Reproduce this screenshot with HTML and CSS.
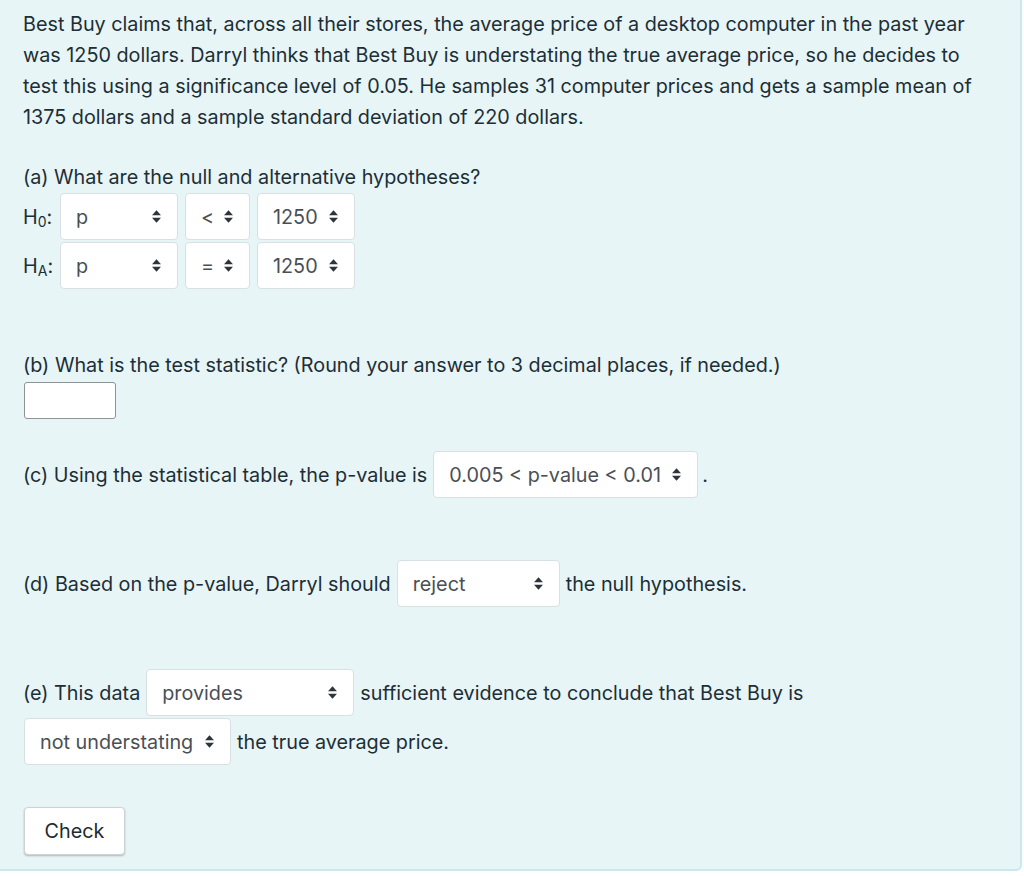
FILE: index.html
```html
<!DOCTYPE html>
<html>
<head>
<meta charset="utf-8">
<link rel="stylesheet" href="styles.css">
</head>
<body>
<div class="panel">
  <p class="intro">Best Buy claims that, across all their stores, the average price of a desktop computer in the past year was 1250 dollars. Darryl thinks that Best Buy is understating the true average price, so he decides to test this using a significance level of 0.05. He samples 31 computer prices and gets a sample mean of 1375 dollars and a sample standard deviation of 220 dollars.</p>

  <div class="line q-a">(a) What are the null and alternative hypotheses?</div>
  <div class="row hyp">
    <span class="hlabel">H<sub>0</sub>:</span>
    <span class="sel w-p"><span>p</span><svg class="arr" viewBox="0 0 10 14"><path d="M5 0 L10 5.6 H0 Z M5 14 L10 8.4 H0 Z"/></svg></span>
    <span class="sel w-op"><span>&lt;</span><svg class="arr" viewBox="0 0 10 14"><path d="M5 0 L10 5.6 H0 Z M5 14 L10 8.4 H0 Z"/></svg></span>
    <span class="sel w-num"><span>1250</span><svg class="arr" viewBox="0 0 10 14"><path d="M5 0 L10 5.6 H0 Z M5 14 L10 8.4 H0 Z"/></svg></span>
  </div>
  <div class="row hyp hyp2">
    <span class="hlabel">H<sub>A</sub>:</span>
    <span class="sel w-p"><span>p</span><svg class="arr" viewBox="0 0 10 14"><path d="M5 0 L10 5.6 H0 Z M5 14 L10 8.4 H0 Z"/></svg></span>
    <span class="sel w-op"><span>=</span><svg class="arr" viewBox="0 0 10 14"><path d="M5 0 L10 5.6 H0 Z M5 14 L10 8.4 H0 Z"/></svg></span>
    <span class="sel w-num"><span>1250</span><svg class="arr" viewBox="0 0 10 14"><path d="M5 0 L10 5.6 H0 Z M5 14 L10 8.4 H0 Z"/></svg></span>
  </div>

  <div class="line q-b">(b) What is the test statistic? (Round your answer to 3 decimal places, if needed.)</div>
  <div class="input-box"></div>

  <div class="row q-c">
    <span>(c) Using the statistical table, the p-value is</span>
    <span class="sel w-pv"><span>0.005 &lt; p-value &lt; 0.01</span><svg class="arr" viewBox="0 0 10 14"><path d="M5 0 L10 5.6 H0 Z M5 14 L10 8.4 H0 Z"/></svg></span>
    <span class="dot">.</span>
  </div>

  <div class="row q-d">
    <span>(d) Based on the p-value, Darryl should</span>
    <span class="sel w-rej"><span>reject</span><svg class="arr" viewBox="0 0 10 14"><path d="M5 0 L10 5.6 H0 Z M5 14 L10 8.4 H0 Z"/></svg></span>
    <span>the null hypothesis.</span>
  </div>

  <div class="row q-e">
    <span>(e) This data</span>
    <span class="sel w-prov"><span>provides</span><svg class="arr" viewBox="0 0 10 14"><path d="M5 0 L10 5.6 H0 Z M5 14 L10 8.4 H0 Z"/></svg></span>
    <span>sufficient evidence to conclude that Best Buy is</span>
  </div>
  <div class="row q-e2">
    <span class="sel w-und"><span>not understating</span><svg class="arr" viewBox="0 0 10 14"><path d="M5 0 L10 5.6 H0 Z M5 14 L10 8.4 H0 Z"/></svg></span>
    <span>the true average price.</span>
  </div>

  <button class="check">Check</button>
</div>
</body>
</html>
```

FILE: styles.css
```css
html, body {
  margin: 0;
  padding: 0;
  background: #ffffff;
}

body {
  font-family: Inter, "Liberation Sans", sans-serif;
  font-size: 19.8px;
  color: #1d2e35;
}

.panel {
  width: 1022px;
  background: #e7f5f7;
  border-right: 2px solid #c9e9ee;
  border-bottom: 2px solid #c9e9ee;
  border-bottom-right-radius: 6px;
  padding: 9px 0 14px 23px;
  box-sizing: border-box;
}

.intro {
  margin: 0;
  line-height: 31px;
  width: 970px;
}

.line {
  line-height: 31px;
}

.q-a { margin-top: 29px; }
.q-b { margin-top: 61px; }

.row {
  display: flex;
  align-items: center;
  gap: 6px;
  height: 47px;
}

.hyp { gap: 7px; }
.hyp2 { margin-top: 2px; }

.hlabel {
  width: 30px;
}

.hlabel sub {
  font-size: 14px;
  vertical-align: -3px;
  line-height: 0;
}

.sel {
  display: inline-flex;
  align-items: center;
  justify-content: space-between;
  box-sizing: border-box;
  height: 47px;
  background: #ffffff;
  border: 1px solid #d9dfe2;
  border-radius: 4px;
  padding: 0 16px 0 15px;
  color: #4a4f54;
  white-space: nowrap;
}

.arr {
  width: 9px;
  height: 13px;
  fill: #2f3438;
  flex: none;
}

.w-p { width: 118px; }
.w-op { width: 65px; }
.w-num { width: 98px; }
.w-pv { width: 265px; }
.w-rej { width: 163px; }
.w-prov { width: 208px; }
.w-und { width: 207px; }

.dot { margin-left: -2px; }

.input-box {
  width: 92px;
  height: 37px;
  box-sizing: border-box;
  margin-top: 1px;
  margin-left: 1px;
  background: #ffffff;
  border: 1px solid #8f9396;
  border-radius: 3px;
}

.q-c { margin-top: 32px; }
.q-d { margin-top: 62px; }
.q-e { margin-top: 62px; }
.q-e2 { margin-top: 2px; margin-left: 1px; }

.check {
  display: block;
  margin-top: 42px;
  margin-left: 1px;
  width: 101px;
  height: 48px;
  font-family: Inter, "Liberation Sans", sans-serif;
  font-size: 19.8px;
  color: #222a2e;
  background: #ffffff;
  border: 1px solid #cfd3d6;
  border-radius: 4px;
  box-shadow: 0 1px 2px rgba(0, 0, 0, 0.25);
  padding: 0;
}
```
